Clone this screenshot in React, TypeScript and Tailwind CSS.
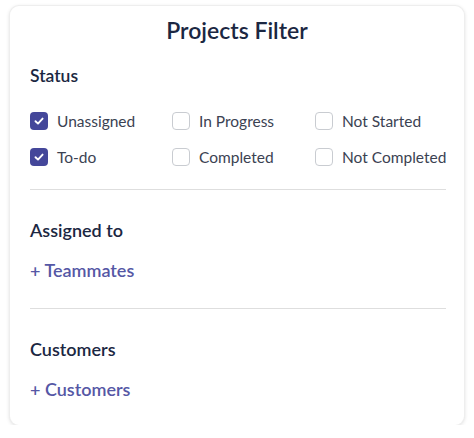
import React from "react";

function Box({ checked }: { checked: boolean }) {
  if (checked) {
    return (
      <span className="flex h-[18px] w-[18px] shrink-0 items-center justify-center rounded-[4px] bg-[#44479a]">
        <svg width="12" height="12" viewBox="0 0 12 12" fill="none">
          <path d="M2.5 6.2 L5 8.6 L9.6 3.6" stroke="white" strokeWidth="1.9" strokeLinecap="round" strokeLinejoin="round" />
        </svg>
      </span>
    );
  }
  return <span className="h-[18px] w-[18px] shrink-0 rounded-[4px] border border-[#c9ccd1] bg-white" />;
}

function Item({ label, checked }: { label: string; checked?: boolean }) {
  return (
    <div className="flex h-6 items-center gap-[9px] whitespace-nowrap">
      <Box checked={!!checked} />
      <span className="whitespace-nowrap text-[15.5px] leading-6 text-[#3b4252]">{label}</span>
    </div>
  );
}

export default function App() {
  return (
    <div className="pl-[10px] pt-[6px]" style={{ fontFamily: "Lato, 'Noto Sans', sans-serif" }}>
      <div className="flex h-[419px] w-[454px] flex-col rounded-[9px] bg-white px-5 pt-[10px] shadow-[0_1px_4px_rgba(0,0,0,0.18)] ring-1 ring-[#eeeeee]">
        <h1 className="text-center text-[23px] font-semibold leading-7 text-[#1b2742]">Projects Filter</h1>
        <h2 className="mt-5 text-[17.5px] font-semibold leading-6 text-[#1b2742]">Status</h2>
        <div className="mt-[21px] grid grid-cols-[142px_143px_1fr] gap-y-3">
          <Item label="Unassigned" checked />
          <Item label="In Progress" />
          <Item label="Not Started" />
          <Item label="To-do" checked />
          <Item label="Completed" />
          <Item label="Not Completed" />
        </div>
        <div className="mt-[20px] h-px w-[416px] bg-[#dedede]" />
        <h2 className="mt-[28px] text-[18px] font-semibold leading-6 text-[#1b2742]">Assigned to</h2>
        <div className="mt-4 text-[18px] font-semibold leading-6 text-[#5557a5]">+ Teammates</div>
        <div className="mt-[26px] h-px w-[416px] bg-[#dedede]" />
        <h2 className="mt-[28px] text-[18px] font-semibold leading-6 text-[#1b2742]">Customers</h2>
        <div className="mt-[16px] text-[18px] font-semibold leading-6 text-[#5557a5]">+ Customers</div>
      </div>
    </div>
  );
}
